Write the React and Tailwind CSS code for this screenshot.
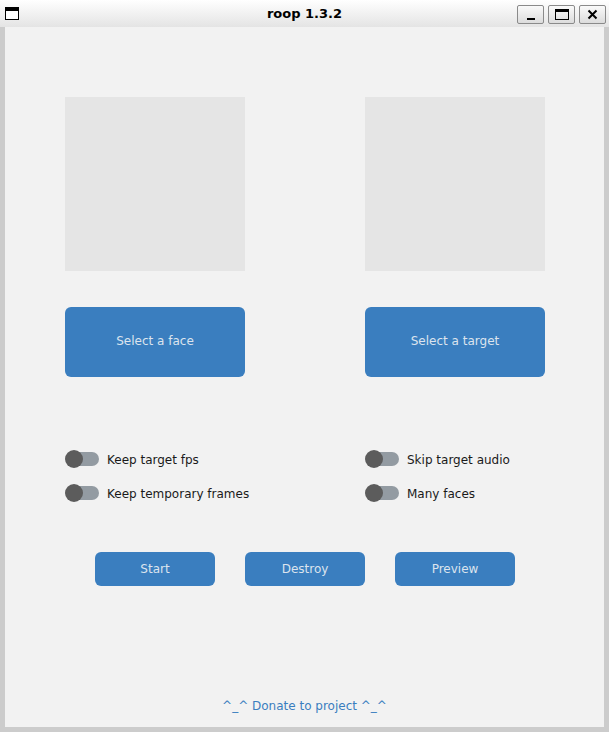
import React from "react";

// Toggle switch, drawn in the unchecked state
function Toggle() {
  return (
    <div className="relative w-[34px] h-[18px] shrink-0">
      <div className="absolute left-[2px] right-0 top-[2px] h-[14px] rounded-full bg-[#939ba2]" />
      <div className="absolute left-0 top-0 w-[18px] h-[18px] rounded-full bg-[#5c5c5c]" />
    </div>
  );
}

function Option({ label }) {
  return (
    <div className="flex items-center h-[18px] gap-[8px]">
      <Toggle />
      <span className="text-[12px] text-[#1a1a1a] leading-none whitespace-nowrap pt-[1px]">{label}</span>
    </div>
  );
}

function TitleButton({ children }) {
  return (
    <div className="w-[27px] h-[19px] border border-[#8a8a8a] rounded-[2px] bg-gradient-to-b from-[#fafafa] to-[#dcdcdc] flex items-center justify-center">
      {children}
    </div>
  );
}

const actions = ["Start", "Destroy", "Preview"];

export default function App() {
  const font = { fontFamily: '"DejaVu Sans", "Liberation Sans", sans-serif' };
  return (
    <div className="w-[609px] h-[732px] flex flex-col bg-[#cccccc]" style={font}>
      {/* title bar */}
      <div className="h-[27px] shrink-0 relative flex items-center justify-center bg-gradient-to-b from-[#ffffff] to-[#e4e4e4]">
        <div className="absolute left-[5px] top-[7px] w-[14px] h-[13px] border border-black border-t-[4px] bg-white" />
        <span className="text-[13px] font-bold text-black">roop 1.3.2</span>
        <div className="absolute right-[3px] top-[5px] flex gap-[4px]">
          <TitleButton>
            <div className="w-[8px] h-[2px] bg-black mt-[8px]" />
          </TitleButton>
          <TitleButton>
            <div className="w-[14px] h-[11px] border-[1.5px] border-black border-t-[3px]" />
          </TitleButton>
          <TitleButton>
            <svg width="11" height="11" viewBox="0 0 11 11">
              <path d="M1.5 1.5 L9.5 9.5 M9.5 1.5 L1.5 9.5" stroke="#000" strokeWidth="2" />
            </svg>
          </TitleButton>
        </div>
      </div>

      {/* window body */}
      <div className="flex-1 mx-[5px] mb-[5px] bg-[#f2f2f2] flex flex-col pt-[70px] pl-[60px] pr-[59px] pb-[10px]">
        <div className="flex gap-[120px]">
          <div className="w-[180px] flex flex-col gap-[36px]">
            <div className="h-[174px] bg-[#e5e5e5]" />
            <button className="h-[70px] rounded-[6px] bg-[#3a7ebf] text-[#dce4ee] text-[12px] pb-[2px]">Select a face</button>
          </div>
          <div className="w-[180px] flex flex-col gap-[36px]">
            <div className="h-[174px] bg-[#e5e5e5]" />
            <button className="h-[70px] rounded-[6px] bg-[#3a7ebf] text-[#dce4ee] text-[12px] pb-[2px]">Select a target</button>
          </div>
        </div>

        <div className="flex gap-[120px] mt-[73px]">
          <div className="w-[180px] flex flex-col gap-[16px]">
            <Option label="Keep target fps" />
            <Option label="Keep temporary frames" />
          </div>
          <div className="w-[180px] flex flex-col gap-[16px]">
            <Option label="Skip target audio" />
            <Option label="Many faces" />
          </div>
        </div>

        <div className="flex gap-[30px] mt-[50px] ml-[30px]">
          {actions.map((a) => (
            <button key={a} className="w-[120px] h-[34px] rounded-[6px] bg-[#3a7ebf] text-[#dce4ee] text-[12px]">
              {a}
            </button>
          ))}
        </div>

        <div className="mt-auto text-center -ml-[60px] -mr-[59px]">
          <span className="text-[12px] text-[#3a7ebf]">^_^ Donate to project ^_^</span>
        </div>
      </div>
    </div>
  );
}
